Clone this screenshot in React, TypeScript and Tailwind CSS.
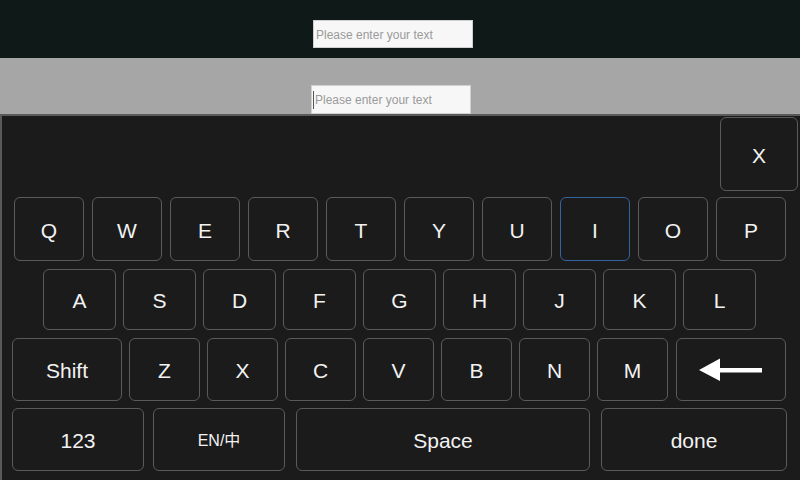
import React from "react";

const font = { fontFamily: '"Liberation Sans", Arial, "Noto Sans CJK SC", sans-serif' };

function Key({ label, w, active, small }: { label: React.ReactNode; w: string; active?: boolean; small?: boolean }) {
  return (
    <div
      className={`${w} h-full shrink-0 flex items-center justify-center pt-[3px] rounded-[6px] border-[1.5px] bg-[#1b1b1b] text-[#f2f2f2] ${
        active ? "border-[#34649f]" : "border-[#5a5a5a]"
      } ${small ? "text-[16px]" : "text-[21px]"}`}
    >
      {label}
    </div>
  );
}

export default function App() {
  const row1 = ["Q", "W", "E", "R", "T", "Y", "U", "I", "O", "P"];
  const row2 = ["A", "S", "D", "F", "G", "H", "J", "K", "L"];
  const row3 = ["Z", "X", "C", "V", "B", "N", "M"];
  return (
    <div className="w-[800px] h-[480px] flex flex-col overflow-hidden" style={font}>
      <div className="h-[58px] shrink-0 bg-[#0f1918] pl-[313px] pt-[20px]">
        <div className="w-[160px] h-[28px] bg-[#f7f7f7] border border-[#cfcfcf] flex items-center pl-[2px] pt-[1px] text-[12px] text-[#9a9a9a]">
          Please enter your text
        </div>
      </div>
      <div className="h-[56px] shrink-0 bg-[#a6a6a6] pl-[311px] pt-[27px]">
        <div className="w-[160px] h-[29px] bg-[#f7f7f7] border border-[#d0d0d0] flex items-center pl-[1px] text-[12px] text-[#9a9a9a]">
          <span className="w-px h-[18px] bg-[#555] mr-[1px]" />
          Please enter your text
        </div>
      </div>
      <div className="flex-1 bg-[#1b1b1b] border-t-2 border-l-2 border-[#5a5a5a] flex flex-col">
        <div className="flex justify-end pr-[2px] pt-[1px] h-[75px]">
          <Key label="X" w="w-[78px]" />
        </div>
        <div className="flex gap-[8px] pl-[12px] mt-[6px] h-[64px]">
          {row1.map((k) => (
            <Key key={k} label={k} w="w-[70px]" active={k === "I"} />
          ))}
        </div>
        <div className="flex gap-[7px] pl-[41px] mt-[8px] h-[61px]">
          {row2.map((k) => (
            <Key key={k} label={k} w="w-[73px]" />
          ))}
        </div>
        <div className="flex gap-[7px] pl-[10px] mt-[8px] h-[63px]">
          <Key label="Shift" w="w-[110px]" />
          {row3.map((k) => (
            <Key key={k} label={k} w="w-[71px]" />
          ))}
          <div className="ml-[1px] w-[110px] h-full shrink-0 flex items-center justify-center rounded-[6px] border-[1.5px] border-[#5a5a5a]">
            <svg width="64" height="24" viewBox="0 0 64 24">
              <polygon points="0,12 21,0.5 21,23" fill="#fff" />
              <rect x="20" y="10" width="43" height="4.5" fill="#fff" />
            </svg>
          </div>
        </div>
        <div className="flex pl-[10px] mt-[7px] h-[63px]">
          <Key label="123" w="w-[132px]" />
          <div className="w-[9px] shrink-0" />
          <Key label="EN/中" w="w-[132px]" small />
          <div className="w-[11px] shrink-0" />
          <Key label="Space" w="w-[294px]" />
          <div className="w-[11px] shrink-0" />
          <Key label="done" w="w-[186px]" />
        </div>
      </div>
    </div>
  );
}
